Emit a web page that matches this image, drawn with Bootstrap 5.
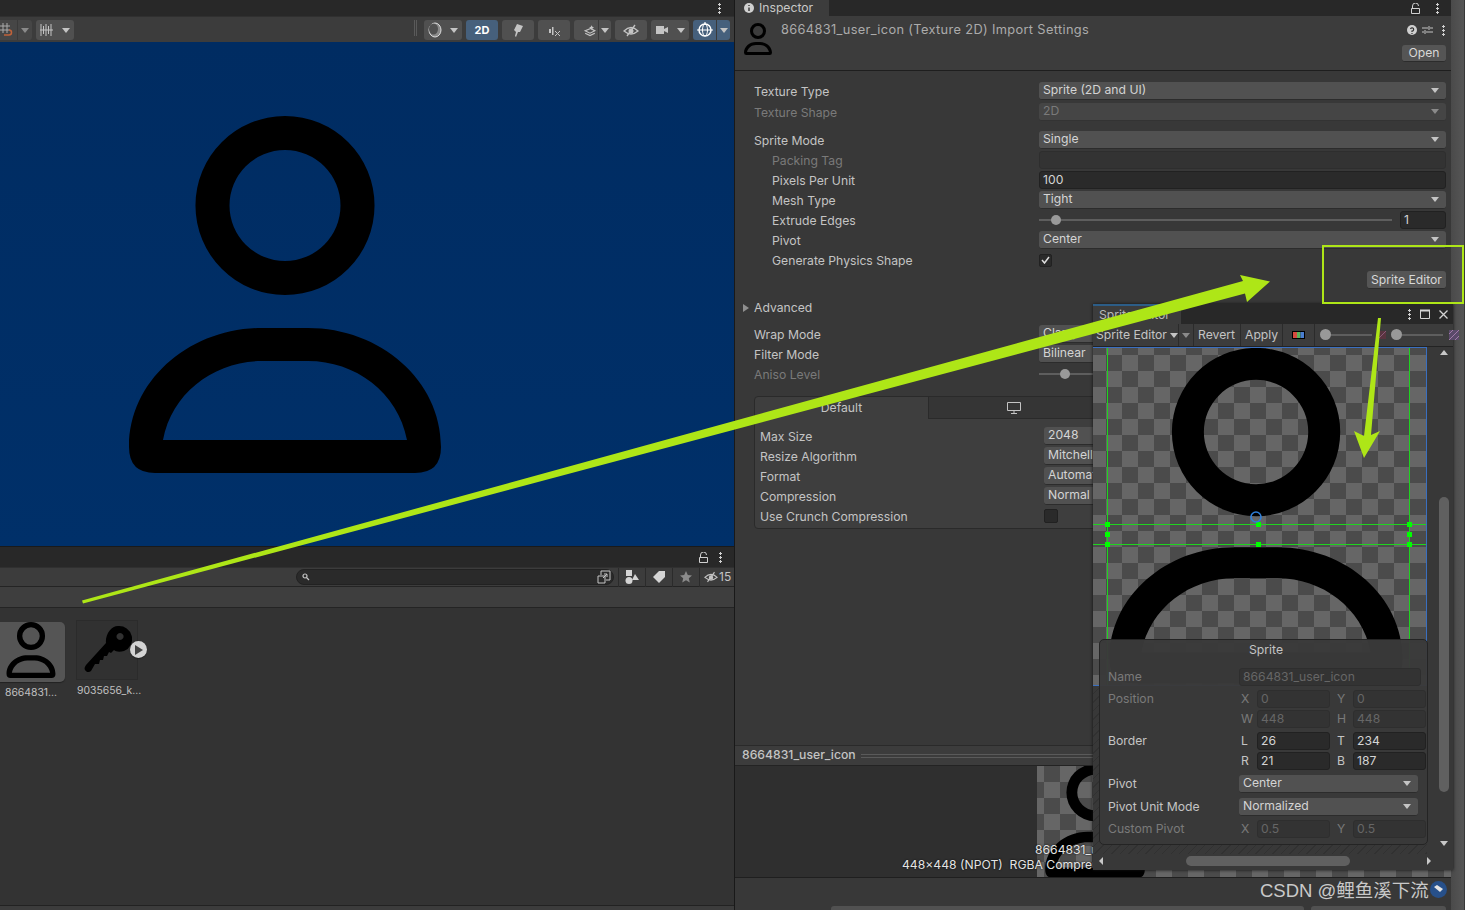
<!DOCTYPE html>
<html lang="en">
<head>
<meta charset="UTF-8">
<title>Unity Sprite Editor</title>
<link href="https://cdn.jsdelivr.net/npm/bootstrap@5.3.0/dist/css/bootstrap.min.css" rel="stylesheet">
<style>
html, body { height: 910px; overflow: hidden; }
body { background: #383838; color: #c4c4c4; font-family: "Inter", "Liberation Sans", sans-serif; font-size: 12.2px; line-height: 1; width: 1465px; position: relative; }
svg { display: block; flex: none; }
.shell { height: 910px; }

/* left side */
.left-pane { width: 735px; height: 910px; border-right: 1px solid #191919; }
.tab-strip { background: #282828; flex: none; }
.dots { width: 3px; height: 11px; flex: none; background: radial-gradient(circle at 1.5px 1.5px, #d0d0d0 1.2px, transparent 1.4px) 0 0 / 3px 4px repeat-y; }
.lock-ico { flex: none; }
.top-strip { height: 16px; padding-right: 13px; }
.scene-bar { height: 26px; background: #3c3c3c; padding-top: 3px; border-top: 1px solid #303030; }
.t-btn { height: 20px; background: #505050; border-radius: 3px; flex: none; color: #c8c8c8; }
.t-btn.on { background: #46607c; color: #fff; font-weight: 700; font-size: 11px; }
.t-grp { margin-left: 4px; }
.w-snap { width: 32px; margin-left: 0; border-radius: 0 3px 3px 0; background: #464646; }
.w-grid { width: 38px; }
.w-shade { width: 38px; }
.w-32 { width: 32px; }
.w-37 { width: 37px; }
.caret-box { width: 14px; border-left: 1px solid #3a3a3a; height: 20px; }
.tri { width: 0; height: 0; border-left: 4px solid transparent; border-right: 4px solid transparent; border-top: 5px solid #c4c4c4; flex: none; }
.tri.dim { border-top-color: #8a8a8a; }
.sep-bar { width: 3px; height: 16px; border-left: 1px solid #5a5a5a; border-right: 1px solid #5a5a5a; margin-right: 7px; }
.scene-view { height: 505px; background: linear-gradient(#002c62, #003069); flex: none; border-bottom: 1px solid #1a1a1a; }
.scene-icon { width: 312px; height: 357px; margin: 74px 0 0 129px; }
.bottom-strip { height: 20px; padding-right: 12px; gap: 11px; }
.proj-bar { height: 20px; background: #3c3c3c; border-top: 1px solid #303030; border-bottom: 1px solid #242424; padding-left: 296px; }
.search-box { width: 318px; height: 16px; background: #2a2a2a; border: 1px solid #222; border-radius: 8px; padding: 0 2px 0 5px; }
.proj-tool { width: 27px; height: 19px; border-left: 1px solid #2b2b2b; color: #c4c4c4; flex: none; }
.proj-count { width: 33px; font-size: 12px; gap: 1px; }
.crumb-bar { height: 21px; background: #3e3e3e; border-bottom: 1px solid #242424; flex: none; }
.asset-area { background: #333; flex: 1 1 auto; padding-top: 12px; }
.asset-cell { flex: none; }
.cell-a { width: 65px; }
.cell-b { width: 62px; margin-left: 11px; position: relative; }
.thumb-a { height: 60px; margin-top: 2px; width: 65px; background: #555; border-radius: 0 5px 5px 0; box-shadow: 0 1px 1px #222; overflow: hidden; padding: 0 0 0 6px; }
.thumb-a svg { width: 50px; height: 56px; }
.thumb-b { width: 62px; height: 60px; border: 1px solid #2b2b2b; background: #313131; }
.asset-name { font-size: 10.4px; margin-top: 6px; color: #c0c0c0; white-space: nowrap; }
.cell-a .asset-name { padding-left: 5px; }
.cell-b .asset-name { padding-left: 1px; }
.play-btn { position: absolute; left: 54px; top: 21px; width: 17px; height: 17px; border-radius: 50%; background: #d4d4d4; box-shadow: 0 1px 1px #222; }
.foot-strip { height: 5px; background: #3c3c3c; border-top: 1px solid #222; flex: none; }

/* inspector */
.ins-pane { width: 716px; height: 910px; flex: none; }
.ins-tabs { height: 16px; background: #282828; padding-right: 12px; }
.ins-tab { width: 94px; height: 16px; background: #3c3c3c; padding-left: 9px; gap: 5px; color: #c8c8c8; font-size: 12.2px; }
.ins-head { height: 55px; background: #3c3c3c; border-bottom: 1px solid #1e1e1e; padding: 7px 5px 0 9px; flex: none; }
.head-icon { width: 28px; height: 32px; margin-right: 9px; margin-top: 0; }
.head-title { font-size: 12.8px; color: #ababab; letter-spacing: .35px; padding-top: 0; flex: 1 1 auto; line-height: 14px; }
.head-tools { gap: 5px; height: 14px; padding-right: 1px; }
.open-btn { height: 17px; width: 44px; font-size: 12.2px; background: #555; color: #d8d8d8; border: 0; border-bottom: 1px solid #2c2c2c; border-radius: 3px; margin-top: 8px; padding: 0; line-height: 16px; }
.ins-body { height: 674px; background: #383838; padding: 10px 5px 0 19px; flex: none; position: relative; }
.f-row { height: 20px; }
.f-lab { width: 285px; flex: none; color: #c4c4c4; padding-top: 2px; }
.f-lab.ind { padding-left: 18px; }
.f-lab.off, .off { color: #7a7a7a; }
.f-val { flex: 1 1 auto; min-width: 0; }
.dd { height: 18px; width: 100%; background: #515151; border-radius: 3px; border-bottom: 1px solid #2c2c2c; padding: 0 7px 0 4px; color: #d4d4d4; }
.dd.off { background: #454545; color: #7a7a7a; border-bottom-color: #333; }
.txt { height: 18px; width: 100%; background: #2a2a2a; border: 1px solid #212121; border-radius: 3px; padding: 0 3px; color: #d4d4d4; }
.txt.off { background: #333; color: #666; border-color: #2e2e2e; }
.gap7 { margin-top: 8px; }
.gap1 { margin-top: 1px; }
.gap6 { margin-top: 6px; }
.chk { width: 13px; height: 13px; background: #2a2a2a; border: 1px solid #212121; border-radius: 2px; }
.slide { flex: 1 1 auto; height: 2px; background: #5e5e5e; position: relative; margin-right: 8px; }
.slide i { position: absolute; left: 12px; top: -4px; width: 10px; height: 10px; border-radius: 50%; background: #999; }
.short-slide { width: 54px; flex: none; }
.short-slide i { left: 21px; }
.num-box { width: 46px; flex: none; margin-left: 0; }
.se-btn { height: 18px; width: 79px; margin-left: auto; font-size: 12.2px; background: #555; color: #d8d8d8; border: 0; border-bottom: 1px solid #2c2c2c; border-radius: 3px; padding: 0; line-height: 16px; }
.adv-row { gap: 5px; margin-left: -11px; }
.adv-tri { width: 0; height: 0; border-top: 4px solid transparent; border-bottom: 4px solid transparent; border-left: 6px solid #8f8f8f; }
.plat-box { margin-top: 12px; height: 133px; background: #3e3e3e; border: 1px solid #2a2a2a; border-radius: 4px; }
.plat-tabs { height: 22px; }
.plat-on { width: 173px; text-align: center; padding: 0 0 0 0; color: #c4c4c4; }
.plat-off { flex: 1 1 auto; background: #353535; border-bottom: 1px solid #2a2a2a; border-left: 1px solid #2a2a2a; padding-left: 78px; }
.plat-rows { padding: 7px 3px 0 5px; }
.plat-rows .f-lab { width: 284px; }
.plat-chk { width: 14px; height: 14px; }
.pv-bar { position: absolute; left: -19px; right: -5px; top: 664px; }

.pv-title { height: 21px; background: #3c3c3c; border-top: 1px solid #2a2a2a; border-bottom: 1px solid #232323; padding-left: 7px; font-weight: 500; gap: 5px; color: #c4c4c4; flex: none; }
.pv-lines { flex: 1 1 auto; height: 4px; border-top: 1px solid #5a5a5a; border-bottom: 1px solid #5a5a5a; }
.pv-area { height: 112px; background: #2f2f2f; border-bottom: 1px solid #1f1f1f; position: relative; overflow: hidden; flex: none; }
.pv-check { position: absolute; left: 302px; top: 0; bottom: 0; right: 0; background: conic-gradient(#666 25%, #4b4b4b 0 50%, #666 0 75%, #4b4b4b 0) 7px 0 / 32px 32px; }
.pv-sprite { position: absolute; left: 310px; top: -2px; width: 100px; height: 114px; }
.pv-name { position: absolute; left: 300px; top: 78px; color: #e4e4e4; font-size: 12.2px; text-shadow: 0 0 2px #000; }
.pv-info { position: absolute; left: 167px; top: 93px; color: #e4e4e4; font-size: 12.2px; white-space: pre; text-shadow: 0 0 2px #000; }
.ins-foot { background: #383838; flex: 1 1 auto; padding: 28px 5px 0 96px; gap: 7px; }
.foot-dd { height: 20px; background: #515151; border-radius: 3px; }
.foot-a { flex: 1 1 auto; }
.foot-b { width: 135px; flex: none; }
.right-gutter { width: 13px; height: 910px; background: linear-gradient(90deg, #4a4a4a, #565656); flex: none; }

/* sprite editor window */
.sp-win { position: absolute; left: 1093px; top: 304px; width: 360px; height: 566px; background: #383838; box-shadow: 0 0 3px #111; z-index: 2; }
.sp-head { height: 20px; background: #282828; }
.sp-tab { width: 88px; height: 20px; background: #3c3c3c; border-top: 2px solid #2c5d87; padding-left: 6px; color: #b8b8b8; }
.sp-tools { margin-left: auto; padding-right: 5px; gap: 9px; }
.sp-bar { height: 23px; background: #3c3c3c; border-bottom: 1px solid #232323; color: #c4c4c4; }
.sb-item { height: 22px; border-right: 1px solid #2b2b2b; flex: none; }
.sb-a { width: 86px; gap: 3px; padding-left: 3px; }
.sb-b { width: 15px; justify-content: center; }
.sb-c { width: 47px; padding-left: 4px; }
.sb-d { width: 42px; padding-left: 4px; }
.sb-e { width: 32px; padding-left: 9px; }
.sb-f { padding-left: 6px; gap: 6px; }
.mini-slide { width: 51px; height: 2px; background: #5e5e5e; position: relative; flex: none; }
.mini-slide i { position: absolute; left: -1px; top: -5px; width: 11px; height: 11px; border-radius: 50%; background: #999; }
.sp-stage { height: 523px; position: relative; background: repeating-linear-gradient(135deg, #383838 0 5px, #313131 5px 6px); }
.sp-canvas { position: absolute; left: 0; top: 0; width: 334px; height: 339px; border-top: 1px solid #3a6fc0; border-right: 1px solid #3a6fc0; border-bottom: 1px solid #3a6fc0; background: conic-gradient(#666 25%, #4b4b4b 0 50%, #666 0 75%, #4b4b4b 0) 13px 7px / 32px 32px; overflow: hidden; }
.sp-canvas svg { width: 333px; height: 338px; }
.sp-vtrack { position: absolute; left: 334px; top: 0; bottom: 0; width: 26px; background: #383838; }
.arrow-up, .arrow-down { position: absolute; left: 13px; width: 0; height: 0; border-left: 4px solid transparent; border-right: 4px solid transparent; }
.arrow-up { top: 3px; border-bottom: 5px solid #c8c8c8; }
.arrow-down { top: 494px; border-top: 5px solid #c8c8c8; }
.v-thumb { position: absolute; left: 12px; top: 150px; width: 10px; height: 295px; background: #606060; border-radius: 5px; }
.sp-hbar { position: absolute; left: 0; width: 360px; bottom: 0; height: 16px; background: #383838; }
.h-thumb { position: absolute; left: 93px; top: 2px; width: 164px; height: 10px; border-radius: 5px; background: #606060; }
.arrow-l, .arrow-r { position: absolute; top: 3px; width: 0; height: 0; border-top: 4px solid transparent; border-bottom: 4px solid transparent; }
.arrow-l { left: 6px; border-right: 4px solid #c8c8c8; }
.arrow-r { left: 334px; border-left: 4px solid #c8c8c8; }
.sp-panel { position: absolute; left: 6px; top: 292px; width: 329px; height: 206px; background: rgba(58, 58, 58, .97); border: 1px solid #242424; border-radius: 5px; padding: 0 7px 0 8px; z-index: 1; }
.sp-title { height: 21px; text-align: center; color: #c4c4c4; padding-left: 4px; padding-top: 4px; }
.sp-row { height: 18px; }
.sp-lab { width: 131px; flex: none; }
.sp-xy { flex: 1 1 auto; gap: 5px; min-width: 0; }
.sp-letter { width: 13px; padding-left: 2px; flex: none; }
.sp-field { width: 73px; flex: none; }
.sp-dd { width: 179px; flex: none; }
.sp-nm { width: 182px; flex: none; }
.mt8 { margin-top: 7px; }
.mt4 { margin-top: 4px; }
.mt2 { margin-top: 2px; }
.mt5 { margin-top: 5px; }
.sp-lab.tp { align-self: flex-start; }

/* annotations */
.mark-layer { position: absolute; left: 0; top: 0; width: 1465px; height: 910px; z-index: 3; pointer-events: none; }
.note-box { position: absolute; left: 1322px; top: 245px; width: 142px; height: 59px; border: 2px solid #aee617; z-index: 3; }
.watermark { position: absolute; left: 1260px; top: 880px; font-family: "Liberation Sans", "Noto Sans CJK SC", sans-serif; font-size: 18.5px; line-height: 22px; color: #c9c9c9; z-index: 4; white-space: nowrap; }
.dot-badge { position: absolute; left: 1430px; top: 881px; width: 17px; height: 17px; border-radius: 50%; background: #27508a; color: #e4e4e4; z-index: 4; }
</style>
</head>
<body>
<svg width="0" height="0" class="position-absolute">
  <symbol id="user" viewBox="129 116 312 357">
    <path fill-rule="evenodd" d="M285 116a89.5 89.5 0 1 1 0 179a89.5 89.5 0 1 1 0-179zM285 150a55.500 55.500 0 1 0 0 111a55.500 55.500 0 1 0 0-111zM129 447C129 380 190 328 262 328H308C380 328 441 380 441 447Q441 473 415 473H155Q129 473 129 447ZM163 440H407C398 392 355 361 308 361H262C215 361 172 392 163 440Z"/>
  </symbol>
</svg>

<div class="shell d-flex">
  <div class="left-pane d-flex flex-column flex-none">
    <div class="tab-strip top-strip d-flex align-items-center justify-content-end"><span class="dots"></span></div>
    <div class="scene-bar d-flex align-items-start flex-none">
      <div class="d-flex w-snap t-btn align-items-center">
        <svg width="17" height="20" viewBox="0 0 17 20"><path d="M0 6h10M0 10h10M3 3v10M7 3v10" stroke="#aaa" fill="none"/><path d="M4 15h5a2.500 2.500 0 0 0 0-5" stroke="#c0623a" stroke-width="1.500" fill="none"/></svg>
        <div class="caret-box d-flex align-items-center justify-content-center"><span class="tri dim"></span></div>
      </div>
      <div class="t-btn t-grp w-grid d-flex align-items-center">
        <svg class="ms-1" width="14" height="16" viewBox="0 0 14 16"><path d="M1 2v12M3.500 4v8M6 2v12M8.500 4v8M11 2v12M0 8h13" stroke="#c4c4c4" fill="none"/></svg>
        <span class="tri ms-2"></span>
      </div>
      <div class="flex-grow-1"></div>
      <span class="sep-bar mt-0"></span>
      <div class="t-btn w-shade d-flex align-items-center">
        <svg class="ms-1" width="14" height="16" viewBox="0 0 14 16"><ellipse cx="7" cy="8" rx="6" ry="7" fill="#8a8a8a" stroke="#ddd"/><ellipse cx="5.500" cy="7" rx="4.500" ry="5.500" fill="#505050"/></svg>
        <span class="tri ms-2"></span>
      </div>
      <div class="t-btn on t-grp w-32 d-flex align-items-center justify-content-center">2D</div>
      <div class="t-btn t-grp w-32 d-flex align-items-center justify-content-center">
        <svg width="12" height="15" viewBox="0 0 12 15"><path d="M5 1l6 2-3 6-2 0-2 5-1-1 1-4-2-2z" fill="#c4c4c4"/></svg>
      </div>
      <div class="t-btn t-grp w-32 d-flex align-items-center justify-content-center">
        <svg width="13" height="13" viewBox="0 0 13 13"><path d="M1 5h2v4H1zM4 3h1.500v8H4z" fill="#c4c4c4"/><path d="M7 7l5 5M12 7l-5 5" stroke="#c4c4c4"/></svg>
      </div>
      <div class="t-btn t-grp w-37 d-flex align-items-center">
        <svg class="ms-1 ps-1" width="20" height="14" viewBox="0 0 20 14"><path d="M4 8l7-3 5 3-6 3zM4 11l6 3 6-3" fill="none" stroke="#c4c4c4" stroke-width="1.500"/><path d="M12 1l1 2 2 1-2 1-1 2-1-2-2-1 2-1z" fill="#c4c4c4"/></svg>
        <div class="caret-box d-flex align-items-center justify-content-center ms-auto"><span class="tri"></span></div>
      </div>
      <div class="t-btn t-grp w-32 d-flex align-items-center justify-content-center">
        <svg width="16" height="13" viewBox="0 0 16 13"><path d="M1 7q7-7 14 0q-7 6-14 0z" fill="none" stroke="#c4c4c4" stroke-width="1.300"/><circle cx="8" cy="7" r="2.500" fill="#c4c4c4"/><path d="M4 12L12 1" stroke="#c4c4c4" stroke-width="1.300"/></svg>
      </div>
      <div class="t-btn t-grp d-flex align-items-center w-gizmo" >
        <svg class="ms-1" width="14" height="12" viewBox="0 0 14 12"><path d="M1 2h8v8H1zM9 5l4-2v6l-4-2z" fill="#c4c4c4"/></svg>
        <span class="tri ms-2 me-1"></span>
      </div>
      <div class="t-btn on t-grp w-37 d-flex align-items-center me-1">
        <svg class="ms-1" width="16" height="16" viewBox="0 0 16 16"><circle cx="8" cy="8" r="6" fill="none" stroke="#fff" stroke-width="1.500"/><ellipse cx="8" cy="8" rx="2.500" ry="6" fill="none" stroke="#fff"/><path d="M0 8h16M8 0v3" stroke="#fff" stroke-width="1.200"/></svg>
        <div class="caret-box d-flex align-items-center justify-content-center ms-auto"><span class="tri"></span></div>
      </div>
    </div>
    <div class="scene-view">
      <svg class="scene-icon" fill="#000"><use href="#user"/></svg>
    </div>
    <div class="tab-strip bottom-strip d-flex align-items-center justify-content-end flex-none">
      <svg class="lock-ico" width="9" height="11" viewBox="0 0 9 11"><path d="M1.500 5V3a3 3 0 0 1 6 0M.5 5.500h8v5h-8z" fill="none" stroke="#d0d0d0"/></svg>
      <span class="dots"></span>
    </div>
    <div class="proj-bar d-flex align-items-center flex-none">
      <div class="search-box d-flex align-items-center">
        <svg width="8" height="8" viewBox="0 0 8 8"><circle cx="3" cy="3" r="2" fill="none" stroke="#c4c4c4" stroke-width="1.200"/><path d="M4.500 4.500L7 7" stroke="#c4c4c4" stroke-width="1.300"/></svg>
        <svg class="ms-auto" width="14" height="14" viewBox="0 0 14 14"><path d="M4 5V1h9v9H9M1 6h7v7H1z" fill="none" stroke="#c4c4c4"/><path d="M6 8l4-4M7 4h3v3" fill="none" stroke="#c4c4c4"/></svg>
      </div>
      <div class="proj-tool d-flex align-items-center justify-content-center ms-1 flex-none">
        <svg width="15" height="14" viewBox="0 0 15 14"><rect x="1" y="0" width="6" height="6" fill="#d4d4d4"/><circle cx="4" cy="10.500" r="3.500" fill="#d4d4d4"/><path d="M10 4l4 6H7z" fill="#d4d4d4"/></svg>
      </div>
      <div class="proj-tool d-flex align-items-center justify-content-center">
        <svg width="12" height="12" viewBox="0 0 12 12"><path d="M6 0h6v6l-6 6-6-6z" fill="#d4d4d4"/></svg>
      </div>
      <div class="proj-tool d-flex align-items-center justify-content-center">
        <svg width="12" height="12" viewBox="0 0 12 12"><path d="M6 0l1.800 4 4.200.4-3.200 2.800 1 4.300L6 9.300 2.200 11.500l1-4.300L0 4.400 4.200 4z" fill="#8a8a8a"/></svg>
      </div>
      <div class="proj-tool proj-count d-flex align-items-center ps-1">
        <svg width="14" height="12" viewBox="0 0 16 13"><path d="M1 7q7-7 14 0q-7 6-14 0z" fill="none" stroke="#c4c4c4" stroke-width="1.300"/><circle cx="8" cy="7" r="2.500" fill="#c4c4c4"/><path d="M4 12L12 1" stroke="#c4c4c4" stroke-width="1.300"/></svg>
        <span>15</span>
      </div>
    </div>
    <div class="crumb-bar"></div>
    <div class="asset-area d-flex">
      <div class="asset-cell cell-a">
        <div class="thumb-a"><svg fill="#000"><use href="#user"/></svg></div>
        <div class="asset-name">8664831...</div>
      </div>
      <div class="asset-cell cell-b">
        <div class="thumb-b d-flex align-items-center justify-content-center">
          <svg width="50" height="50" viewBox="0 0 50 50"><path fill-rule="evenodd" d="M36 1a13 13 0 0 1 6 25c-4 1-8 1-10-1l-3 3-2-1-2 4h-3l-1 4h-3l-1 4h-4l-4 7c-2 2-5 1-6-1-1-2 0-3 1-5L24 18c-1-8 5-17 12-17zM38 8a3.500 3.500 0 1 0 .1 0z"/></svg>
        </div>
        <div class="play-btn d-flex align-items-center justify-content-center"><svg width="9" height="10" viewBox="0 0 9 10"><path d="M1 0l8 5-8 5z" fill="#444"/></svg></div>
        <div class="asset-name">9035656_k...</div>
      </div>
    </div>
    <div class="foot-strip"></div>
  </div>

  <div class="ins-pane d-flex flex-column">
    <div class="ins-tabs d-flex align-items-center flex-none">
      <div class="ins-tab d-flex align-items-center">
        <svg width="10" height="10" viewBox="0 0 10 10"><circle cx="5" cy="5" r="5" fill="#d0d0d0"/><path d="M5 2v1M5 4.500V8" stroke="#333" stroke-width="1.400"/></svg>
        <span>Inspector</span>
      </div>
      <svg class="lock-ico ms-auto me-3" width="9" height="11" viewBox="0 0 9 11"><path d="M1.500 5V3a3 3 0 0 1 6 0M.5 5.500h8v5h-8z" fill="none" stroke="#d0d0d0"/></svg>
      <span class="dots"></span>
    </div>
    <div class="ins-head d-flex">
      <svg class="head-icon" fill="#000"><use href="#user"/></svg>
      <div class="head-title">8664831_user_icon (Texture 2D) Import Settings</div>
      <div class="d-flex flex-column align-items-end">
        <div class="head-tools d-flex align-items-center">
          <svg width="10" height="10" viewBox="0 0 10 10"><circle cx="5" cy="5" r="5" fill="#d0d0d0"/><path d="M3.500 4a1.600 1.600 0 1 1 1.500 2v1M5 8v1" stroke="#333" stroke-width="1.200" fill="none"/></svg>
          <svg width="11" height="10" viewBox="0 0 11 10"><path d="M0 3h6M8 3h3M0 7h2M4 7h7M7 1v4M3 5v4" stroke="#c4c4c4" fill="none"/></svg>
          <span class="dots ms-1"></span>
        </div>
        <button class="btn open-btn" type="button">Open</button>
      </div>
    </div>
    <div class="ins-body">
      <div class="f-row d-flex align-items-center"><div class="f-lab">Texture Type</div><div class="f-val"><div class="dd d-flex align-items-center justify-content-between"><span>Sprite (2D and UI)</span><span class="tri"></span></div></div></div>
      <div class="f-row gap1 d-flex align-items-center"><div class="f-lab off">Texture Shape</div><div class="f-val"><div class="dd off d-flex align-items-center justify-content-between"><span>2D</span><span class="tri dim"></span></div></div></div>
      <div class="f-row gap7 d-flex align-items-center"><div class="f-lab">Sprite Mode</div><div class="f-val"><div class="dd d-flex align-items-center justify-content-between"><span>Single</span><span class="tri"></span></div></div></div>
      <div class="f-row d-flex align-items-center"><div class="f-lab ind off">Packing Tag</div><div class="f-val"><div class="txt off"></div></div></div>
      <div class="f-row d-flex align-items-center"><div class="f-lab ind">Pixels Per Unit</div><div class="f-val"><div class="txt d-flex align-items-center">100</div></div></div>
      <div class="f-row d-flex align-items-center"><div class="f-lab ind">Mesh Type</div><div class="f-val"><div class="dd d-flex align-items-center justify-content-between"><span>Tight</span><span class="tri"></span></div></div></div>
      <div class="f-row d-flex align-items-center"><div class="f-lab ind">Extrude Edges</div><div class="f-val d-flex align-items-center"><div class="slide"><i></i></div><div class="txt num-box d-flex align-items-center">1</div></div></div>
      <div class="f-row d-flex align-items-center"><div class="f-lab ind">Pivot</div><div class="f-val"><div class="dd d-flex align-items-center justify-content-between"><span>Center</span><span class="tri"></span></div></div></div>
      <div class="f-row d-flex align-items-center"><div class="f-lab ind">Generate Physics Shape</div><div class="f-val"><div class="chk d-flex align-items-center justify-content-center"><svg width="9" height="8" viewBox="0 0 9 8"><path d="M1 4l2.500 3L8 1" fill="none" stroke="#ddd" stroke-width="1.500"/></svg></div></div></div>
      <div class="f-row d-flex align-items-center"><button class="btn se-btn" type="button">Sprite Editor</button></div>
      <div class="f-row gap7 d-flex align-items-center adv-row"><span class="adv-tri"></span><span>Advanced</span></div>
      <div class="f-row gap6 d-flex align-items-center"><div class="f-lab">Wrap Mode</div><div class="f-val"><div class="dd d-flex align-items-center">Clamp</div></div></div>
      <div class="f-row d-flex align-items-center"><div class="f-lab">Filter Mode</div><div class="f-val"><div class="dd d-flex align-items-center">Bilinear</div></div></div>
      <div class="f-row d-flex align-items-center"><div class="f-lab off">Aniso Level</div><div class="f-val d-flex align-items-center"><div class="slide short-slide"><i></i></div></div></div>
      <div class="plat-box">
        <div class="plat-tabs d-flex">
          <div class="plat-on d-flex align-items-center justify-content-center">Default</div>
          <div class="plat-off d-flex align-items-center">
            <svg width="14" height="12" viewBox="0 0 14 12"><path d="M.5.5h13v8H.5zM7 9v2M4 11.500h6" fill="none" stroke="#c4c4c4"/></svg>
          </div>
        </div>
        <div class="plat-rows">
          <div class="f-row d-flex align-items-center"><div class="f-lab">Max Size</div><div class="f-val"><div class="dd d-flex align-items-center">2048</div></div></div>
          <div class="f-row d-flex align-items-center"><div class="f-lab">Resize Algorithm</div><div class="f-val"><div class="dd d-flex align-items-center">Mitchell</div></div></div>
          <div class="f-row d-flex align-items-center"><div class="f-lab">Format</div><div class="f-val"><div class="dd d-flex align-items-center">Automatic</div></div></div>
          <div class="f-row d-flex align-items-center"><div class="f-lab">Compression</div><div class="f-val"><div class="dd d-flex align-items-center">Normal Quality</div></div></div>
          <div class="f-row d-flex align-items-center"><div class="f-lab">Use Crunch Compression</div><div class="f-val"><div class="chk plat-chk"></div></div></div>
        </div>
      </div>
    </div>
    <div class="pv-title d-flex align-items-center"><span>8664831_user_icon</span><span class="pv-lines"></span></div>
    <div class="pv-area">
      <div class="pv-check"></div>
      <svg class="pv-sprite" fill="#000"><use href="#user"/></svg>
      <div class="pv-name">8664831_user_icon</div>
      <div class="pv-info">448x448 (NPOT)  RGBA Compressed DXT5</div>
    </div>
    <div class="ins-foot d-flex">
      <div class="foot-dd foot-a"></div>
      <div class="foot-dd foot-b"></div>
    </div>
  </div>
  <div class="right-gutter"></div>
</div>

<div class="sp-win d-flex flex-column">
  <div class="sp-head d-flex align-items-center">
    <div class="sp-tab d-flex align-items-center">Sprite Editor</div>
    <div class="sp-tools d-flex align-items-center">
      <span class="dots"></span>
      <svg width="10" height="10" viewBox="0 0 10 10"><path d="M.5 1.500h9v8h-9z" fill="none" stroke="#d4d4d4"/><path d="M0 1.500h10" stroke="#d4d4d4" stroke-width="2"/></svg>
      <svg width="9" height="9" viewBox="0 0 9 9"><path d="M.5.5l8 8M8.500.5l-8 8" stroke="#d4d4d4" stroke-width="1.300"/></svg>
    </div>
  </div>
  <div class="sp-bar d-flex">
    <div class="sb-item sb-a d-flex align-items-center"><span>Sprite Editor</span><span class="tri"></span></div>
    <div class="sb-item sb-b d-flex align-items-center"><span class="tri dim"></span></div>
    <div class="sb-item sb-c d-flex align-items-center">Revert</div>
    <div class="sb-item sb-d d-flex align-items-center">Apply</div>
    <div class="sb-item sb-e d-flex align-items-center">
      <svg width="13" height="8" viewBox="0 0 13 8"><rect width="13" height="8" fill="#000"/><rect x="1" y="1" width="4" height="6" fill="#d64b3f"/><rect x="5" y="1" width="3.500" height="6" fill="#5bb35a"/><rect x="8.500" y="1" width="3.500" height="6" fill="#4a7ed0"/></svg>
    </div>
    <div class="sb-f d-flex align-items-center">
      <div class="mini-slide"><i></i></div>
      <svg width="8" height="8" viewBox="0 0 8 8"><rect width="8" height="8" fill="#58343f"/><path d="M0 8L8 0" stroke="#8a5a78"/></svg>
      <div class="mini-slide"><i></i></div>
      <svg width="10" height="10" viewBox="0 0 10 10"><rect width="10" height="10" fill="#5a4a6a"/><path d="M0 4L4 0M0 10L10 0M6 10L10 6" stroke="#a27aa8"/></svg>
    </div>
  </div>
  <div class="sp-stage">
    <div class="sp-canvas">
      <svg viewBox="1094 347 333 338" fill="#000">
        <use href="#user" x="1110.400" y="346.900" width="293.300" height="335.600"/>
        <path d="M1108.500 347v338M1410.500 347v338M1094 523.500h333M1094 543.500h333" stroke="#1fd41f" fill="none"/>
        <g fill="#00ff00">
          <rect x="1106" y="521" width="5" height="5"/><rect x="1106" y="531" width="5" height="5"/><rect x="1106" y="541" width="5" height="5"/>
          <rect x="1257" y="521" width="5" height="5"/><rect x="1257" y="541" width="5" height="5"/>
          <rect x="1408" y="521" width="5" height="5"/><rect x="1408" y="531" width="5" height="5"/><rect x="1408" y="541" width="5" height="5"/>
        </g>
        <circle cx="1257" cy="516" r="5" fill="none" stroke="#2f7fd8" stroke-width="1.600"/>
      </svg>
    </div>
    <div class="sp-vtrack">
      <span class="arrow-up"></span>
      <span class="v-thumb"></span>
      <span class="arrow-down"></span>
    </div>
    <div class="sp-panel">
      <div class="sp-title">Sprite</div>
      <div class="sp-row mt8 d-flex align-items-center"><div class="sp-lab off">Name</div><div class="txt off sp-nm d-flex align-items-center">8664831_user_icon</div></div>
      <div class="sp-row mt4 d-flex align-items-center"><div class="sp-lab off">Position</div><div class="sp-xy d-flex align-items-center"><span class="sp-letter off">X</span><div class="txt off sp-field d-flex align-items-center">0</div><span class="sp-letter off">Y</span><div class="txt off sp-field d-flex align-items-center">0</div></div></div>
      <div class="sp-row mt2 d-flex align-items-center"><div class="sp-lab"></div><div class="sp-xy d-flex align-items-center"><span class="sp-letter off">W</span><div class="txt off sp-field d-flex align-items-center">448</div><span class="sp-letter off">H</span><div class="txt off sp-field d-flex align-items-center">448</div></div></div>
      <div class="sp-row mt4 d-flex align-items-center"><div class="sp-lab">Border</div><div class="sp-xy d-flex align-items-center"><span class="sp-letter">L</span><div class="txt sp-field d-flex align-items-center">26</div><span class="sp-letter">T</span><div class="txt sp-field d-flex align-items-center">234</div></div></div>
      <div class="sp-row mt2 d-flex align-items-center"><div class="sp-lab"></div><div class="sp-xy d-flex align-items-center"><span class="sp-letter">R</span><div class="txt sp-field d-flex align-items-center">21</div><span class="sp-letter">B</span><div class="txt sp-field d-flex align-items-center">187</div></div></div>
      <div class="sp-row mt5 d-flex align-items-center"><div class="sp-lab">Pivot</div><div class="dd sp-dd d-flex align-items-center justify-content-between"><span>Center</span><span class="tri"></span></div></div>
      <div class="sp-row mt5 d-flex align-items-center"><div class="sp-lab">Pivot Unit Mode</div><div class="dd sp-dd d-flex align-items-center justify-content-between"><span>Normalized</span><span class="tri"></span></div></div>
      <div class="sp-row mt4 d-flex align-items-center"><div class="sp-lab off">Custom Pivot</div><div class="sp-xy d-flex align-items-center"><span class="sp-letter off">X</span><div class="txt off sp-field d-flex align-items-center">0.5</div><span class="sp-letter off">Y</span><div class="txt off sp-field d-flex align-items-center">0.5</div></div></div>
    </div>
    <div class="sp-hbar">
      <span class="arrow-l"></span>
      <span class="h-thumb"></span>
      <span class="arrow-r"></span>
    </div>
  </div>
</div>

<svg class="mark-layer" viewBox="0 0 1465 910">
  <polygon fill="#aee617" points="82,600.500 1243,281 1240,275 1270,281.500 1247,302 1245,293.500 83,603.500"/>
  <polygon fill="#aee617" points="1378,318 1381,318 1371,435 1380,431 1364,458 1354,431 1364,436"/>
</svg>
<div class="note-box"></div>
<div class="watermark">CSDN @鲤鱼溪下流</div>
<div class="dot-badge d-flex align-items-center justify-content-center">
  <svg width="11" height="9" viewBox="0 0 11 9"><path d="M1 2l3-2 6 4-3 3z" fill="#e4e4e4"/></svg>
</div>
</body>
</html>
